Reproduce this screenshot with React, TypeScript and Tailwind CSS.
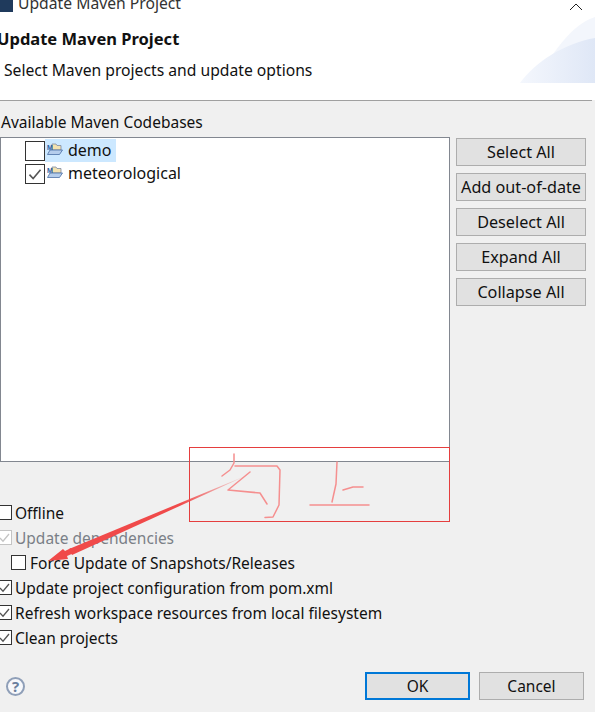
import React from "react";

const sideButtons = ["Select All", "Add out-of-date", "Deselect All", "Expand All", "Collapse All"];

// eclipse style check box, the tick is a small grey stroke
const CheckBox = ({
  checked,
  disabled,
  className,
  tick = 13,
}: {
  checked?: boolean;
  disabled?: boolean;
  className: string;
  tick?: number;
}) => (
  <span
    className={`flex shrink-0 items-center justify-center border bg-white ${
      disabled ? "border-[#c4c4c4]" : "border-[#333333]"
    } ${className}`}
  >
    {checked && (
      <svg width={tick} height={tick} viewBox="0 0 13 13" fill="none">
        <path d="M2 7l3 3.2L11 3" stroke={disabled ? "#c4c4c4" : "#555555"} strokeWidth="1.3" />
      </svg>
    )}
  </span>
);

const MavenFolder = () => (
  <svg width="16" height="14" viewBox="0 0 16 14" fill="none" className="mb-[2px] shrink-0">
    <path d="M5 1h4l1 1.500h4V7H5z" fill="#f3e2b0" stroke="#7f8ba3" strokeWidth="0.8" />
    <path d="M3 7h12.500l-3 4.500H0.500z" fill="#b5cdec" stroke="#4a6fa5" strokeWidth="0.8" />
    <text x="0" y="6.500" fontSize="7" fontWeight="700" fill="#2e5c9e" fontFamily="Liberation Sans, sans-serif">
      M
    </text>
  </svg>
);

const Option = ({
  label,
  checked,
  disabled,
  indent,
}: {
  label: string;
  checked?: boolean;
  disabled?: boolean;
  indent?: boolean;
}) => (
  <div className={`flex h-[25px] items-center ${disabled ? "text-[#7a7f87]" : "text-[#111111]"}`}>
    <CheckBox
      checked={checked}
      disabled={disabled}
      className={`h-[15px] w-[15px] ${indent ? "ml-[11px] mr-[4px]" : "-ml-[3px] mr-[3px]"}`}
    />
    <span>{label}</span>
  </div>
);

export default function App() {
  return (
    <div className="relative h-[712px] w-[595px] overflow-hidden bg-[#f0f0f0] text-[15.5px] leading-[20px] text-[#111111] [font-family:'Noto_Sans','Open_Sans',sans-serif]">
      {/* header */}
      <div className="relative h-[100px] overflow-hidden bg-white">
        {/* corner decoration */}
        <svg className="absolute right-0 top-[17px]" width="75" height="66" viewBox="0 0 75 66" fill="none">
          <defs>
            <linearGradient id="corner" x1="0" y1="0" x2="1" y2="0">
              <stop offset="0" stopColor="#f4f7fd" />
              <stop offset="1" stopColor="#dfe7f6" />
            </linearGradient>
          </defs>
          <path d="M15 66C30 40 50 8 75 0V66z" fill="#f3f6fc" />
          <path d="M0 66C15 45 45 26 75 21V66z" fill="url(#corner)" />
        </svg>
        <div className="relative -mt-[7px] flex h-[20px] items-center">
          <span className="h-[18px] w-[13px] bg-[#1f3a5c]" />
          <span className="ml-[5px] text-[15.7px] text-[#333333]">Update Maven Project</span>
          <svg width="14" height="14" viewBox="0 0 14 14" className="ml-auto mr-[12px] mt-[2px]" fill="none">
            <path d="M1 13L7 7l6 6" stroke="#222222" strokeWidth="1" />
          </svg>
        </div>
        <div className="relative mt-[15px] -ml-[3px] text-[16.5px] font-bold leading-[22px]">Update Maven Project</div>
        <div className="relative ml-[4px] mt-[9px] text-[15.7px] leading-[22px]">Select Maven projects and update options</div>
      </div>
      <div className="h-px w-[592px] bg-[#a0a0a0]" />

      {/* codebases */}
      <div className="ml-px mt-[10px] leading-[22px]">Available Maven Codebases</div>
      <div className="mt-[4px] flex items-start">
        <div className="h-[325px] w-[450px] border border-[#828790] bg-white pt-px text-[16px]">
          <div className="flex h-[23px] items-center pl-[24px]">
            <CheckBox className="h-[20px] w-[20px]" />
            <div className="flex h-[23px] items-center bg-[#cce8ff] pl-[2px] pr-[4px]">
              <MavenFolder />
              <span className="ml-[5px] -mt-[2px]">demo</span>
            </div>
          </div>
          <div className="flex h-[23px] items-center pl-[24px]">
            <CheckBox checked tick={16} className="h-[20px] w-[20px]" />
            <div className="ml-[2px] flex items-center">
              <MavenFolder />
              <span className="ml-[5px] -mt-[2px]">meteorological</span>
            </div>
          </div>
        </div>
        <div className="ml-[6px] mt-px flex w-[130px] flex-col gap-[7px] text-[16.2px]">
          {sideButtons.map((b) => (
            <div
              key={b}
              className="flex h-[28px] items-center justify-center whitespace-nowrap border border-[#adadad] bg-[#e1e1e1]"
            >
              {b}
            </div>
          ))}
        </div>
      </div>

      {/* options */}
      <div className="mt-[38px] flex flex-col">
        <Option label="Offline" />
        <Option label="Update dependencies" checked disabled />
        <Option label="Force Update of Snapshots/Releases" indent />
        <Option label="Update project configuration from pom.xml" checked />
        <Option label="Refresh workspace resources from local filesystem" checked />
        <Option label="Clean projects" checked />
      </div>

      {/* footer */}
      <div className="mt-[22px] flex items-center">
        <span className="ml-[6px] flex h-[19px] w-[19px] items-center justify-center rounded-full border-2 border-[#8f9fb8] bg-[#f7f8fb] text-[15px] font-bold text-[#6b7f9e]">
          ?
        </span>
        <div className="ml-auto mr-[11px] flex gap-[9px]">
          <div className="flex h-[28px] w-[105px] items-center justify-center border-2 border-[#0078d7] bg-[#e1e1e1]">OK</div>
          <div className="flex h-[28px] w-[105px] items-center justify-center border border-[#adadad] bg-[#e1e1e1]">Cancel</div>
        </div>
      </div>

      {/* red annotation drawn on top of the screenshot */}
      <div className="absolute left-[189px] top-[447px] h-[75px] w-[261px] border border-[#e53e3e]" />
      <svg className="absolute inset-0" width="595" height="712" viewBox="0 0 595 712" fill="none">
        <defs>
          <linearGradient id="fade" gradientUnits="userSpaceOnUse" x1="250" y1="474" x2="180" y2="504">
            <stop offset="0" stopColor="#f04a4a" stopOpacity="0" />
            <stop offset="1" stopColor="#f04a4a" />
          </linearGradient>
        </defs>
        <g stroke="#f58f8f" strokeWidth="1.5" strokeLinejoin="round" strokeLinecap="round">
          <path d="M234 454v9l-4 7-8 6" />
          <path d="M250 472l-22 18 32 3 7 11" />
          <path d="M235 466h42l3 4-1 35-6 12-8 0.500" />
          <path d="M337 462l-1 22-4 18" />
          <path d="M343 490l10-3 10 0" />
          <path d="M310 505h59" />
        </g>
        <path d="M250 474L69 549l3 6L250 474z" fill="url(#fade)" />
        <path d="M48 561l15-12 2 2 6-3 3 5-7 3 1 3z" fill="#f04a4a" />
      </svg>
    </div>
  );
}
